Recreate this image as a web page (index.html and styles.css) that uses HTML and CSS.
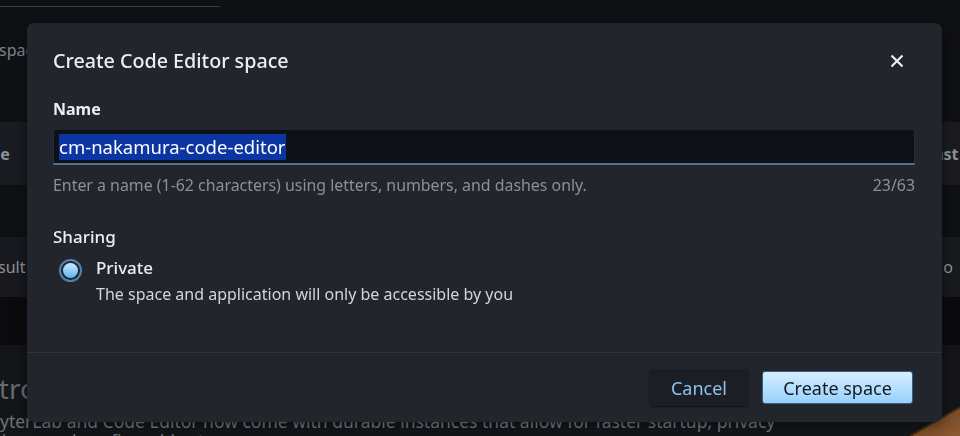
FILE: index.html
```html
<!DOCTYPE html>
<html lang="en">
<head>
<meta charset="utf-8">
<title>Create Code Editor space</title>
<link rel="stylesheet" href="styles.css">
</head>
<body>
<div class="page">
  <div class="topline"></div>
  <div class="heading-row"><span class="spaces">spaces</span></div>
  <div class="trow thead"><span class="c-name">Name</span><span class="c-last">Last modified</span></div>
  <div class="gap1"></div>
  <div class="trow tdata"><span class="c-result">Result</span><span class="c-last2">No</span></div>
  <div class="gap2"></div>
  <section class="intro">
    <div class="intro-text">
      <h2>Introducing</h2>
      <p>JupyterLab and Code Editor now come with durable instances that allow for faster startup, privacy options, and configurable storage</p>
    </div>
    <svg class="art" width="50" height="30" viewBox="0 0 50 30" aria-hidden="true">
      <defs>
        <linearGradient id="og" x1="0" y1="0" x2="1" y2="1">
          <stop offset="0" stop-color="#5e3a20"/>
          <stop offset="1" stop-color="#8f5a31"/>
        </linearGradient>
      </defs>
      <polygon points="0,30 50,1 50,30" fill="url(#og)"/>
      <line x1="0" y1="30" x2="50" y2="1" stroke="#3f2716" stroke-width="2"/>
    </svg>
  </section>
</div>

<div class="overlay">
  <div class="modal" role="dialog" aria-labelledby="mtitle">
    <div class="modal-header">
      <h1 id="mtitle">Create Code Editor space</h1>
      <button class="close" aria-label="Close">
        <svg width="14" height="14" viewBox="0 0 14 14"><path d="M1.5 1.5 L12.5 12.5 M12.5 1.5 L1.5 12.5" stroke="#eceef0" stroke-width="2.2" fill="none"/></svg>
      </button>
    </div>
    <div class="modal-body">
      <div class="field-label">Name</div>
      <div class="input"><span class="sel">cm-nakamura-code-editor</span></div>
      <div class="hint"><span>Enter a name (1-62 characters) using letters, numbers, and dashes only.</span><span>23/63</span></div>
      <div class="section-label">Sharing</div>
      <div class="radio-row">
        <span class="radio"><span class="dot"></span></span>
        <div>
          <div class="radio-label">Private</div>
          <div class="radio-desc">The space and application will only be accessible by you</div>
        </div>
      </div>
    </div>
    <div class="modal-footer">
      <button class="btn-cancel">Cancel</button>
      <button class="btn-primary">Create space</button>
    </div>
  </div>
</div>
</body>
</html>
```

FILE: styles.css
```css
html, body {
  margin: 0;
  padding: 0;
  width: 960px;
  height: 436px;
  overflow: hidden;
  background: #0f1014;
  font-family: "Noto Sans", "Open Sans", sans-serif;
}

.page {
  width: 1000px;
  margin-left: -40px;
}

.topline {
  margin-top: 6px;
  height: 1px;
  width: 260px;
  background: #3a3c42;
}

.heading-row {
  height: 115px;
  box-sizing: border-box;
  padding-top: 33px;
}

.spaces {
  display: block;
  padding-left: 39px;
  font-size: 16px;
  line-height: 20px;
  color: #7f838a;
}

.trow {
  display: flex;
  align-items: center;
  justify-content: space-between;
  white-space: nowrap;
  font-size: 16px;
  color: #8d9198;
}

.thead {
  height: 63px;
  background: #1a1b20;
  font-weight: 700;
}

.c-name { padding-left: 2px; }
.c-last { width: 35px; }

.gap1 { height: 52px; }

.tdata {
  height: 60px;
  background: #18191e;
}

.c-result { padding-left: 19px; }
.c-last2 { width: 29px; }

.gap2 {
  height: 48px;
  background: #0b0b0d;
}

.intro {
  height: 91px;
  background: #141519;
  display: flex;
  align-items: flex-end;
  overflow: hidden;
}

.intro-text {
  flex: 1;
  align-self: flex-start;
  padding-top: 25px;
}

.intro-text h2 {
  margin: 0;
  padding-left: 12px;
  font-size: 28px;
  line-height: 36px;
  font-weight: 400;
  color: #66696f;
}

.intro-text p {
  margin: 5px 0 0;
  padding-left: 14px;
  width: 850px;
  font-size: 17.5px;
  line-height: 20px;
  color: #6f737a;
}

.art {
  flex: none;
  display: block;
}

/* Modal */
.overlay {
  position: fixed;
  inset: 0;
  padding: 23px 18px 0 27px;
}

.modal {
  background: #23252d;
  border-radius: 7px;
  color: #e9ebed;
  box-shadow: 0 2px 12px rgba(0, 0, 0, 0.45);
}

.modal-header {
  display: flex;
  align-items: center;
  justify-content: space-between;
  padding: 24px 27px 0 26px;
}

.modal-header h1 {
  margin: 0;
  font-size: 19.7px;
  line-height: 28px;
  font-weight: 500;
  color: #eceef0;
}

.close {
  width: 24px;
  height: 24px;
  margin-right: 6px;
  padding: 0;
  border: 0;
  background: transparent;
  display: flex;
  align-items: center;
  justify-content: center;
}

.modal-body {
  padding: 0 27px 48px 26px;
}

.field-label {
  margin-top: 23px;
  font-size: 16px;
  line-height: 22px;
  font-weight: 700;
  color: #eceef0;
}

.input {
  margin-top: 9px;
  height: 36px;
  box-sizing: border-box;
  background: #101116;
  border: 1px solid #1a3046;
  border-top-color: #1c2633;
  border-bottom: 2px solid #56728e;
  padding-left: 5px;
  display: flex;
  align-items: center;
}

.sel {
  background: #0b35a3;
  color: #ffffff;
  font-size: 18.5px;
  line-height: 26px;
  padding-right: 1px;
}

.hint {
  margin-top: 10px;
  display: flex;
  justify-content: space-between;
  font-size: 15.9px;
  line-height: 20px;
  color: #8a9099;
}

.section-label {
  margin-top: 30px;
  font-size: 17px;
  line-height: 24px;
  font-weight: 500;
  color: #eceef0;
}

.radio-row {
  margin-top: 7px;
  display: flex;
  align-items: flex-start;
}

.radio {
  flex: none;
  width: 23px;
  height: 23px;
  box-sizing: border-box;
  margin: 3px 14px 0 6px;
  border: 2px solid #4f82ad;
  border-radius: 50%;
  display: flex;
  align-items: center;
  justify-content: center;
}

.dot {
  width: 15px;
  height: 15px;
  border-radius: 50%;
  background: linear-gradient(#cdeaff, #5db5f4);
}

.radio-label {
  font-size: 17px;
  line-height: 24px;
  font-weight: 500;
  color: #eceef0;
}

.radio-desc {
  margin-top: 4px;
  font-size: 16px;
  line-height: 20px;
  color: #d2d5da;
}

.modal-footer {
  border-top: 1px solid #30333b;
  padding: 16px 29px 16px 26px;
  display: flex;
  justify-content: flex-end;
  align-items: center;
  gap: 13px;
}

.btn-cancel {
  width: 100px;
  height: 37px;
  border: 0;
  border-radius: 4px;
  background: #1b1e25;
  box-shadow: 0 1px 2px rgba(0, 0, 0, 0.5);
  color: #8ec3ee;
  font-family: inherit;
  font-size: 18px;
  padding: 0;
}

.btn-primary {
  width: 151px;
  height: 33px;
  border: 1px solid #2f5f8a;
  border-radius: 3px;
  background: linear-gradient(#d6eeff, #98d1fd);
  color: #101a25;
  font-family: inherit;
  font-size: 18px;
  padding: 0;
}
```
